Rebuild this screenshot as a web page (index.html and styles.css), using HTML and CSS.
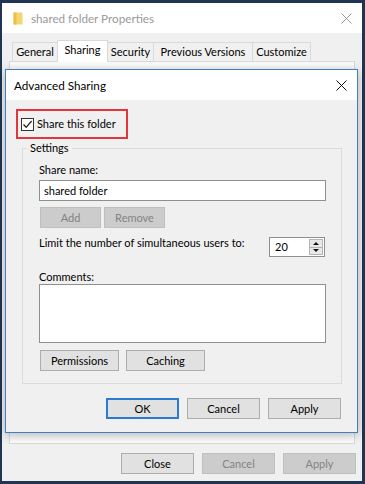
FILE: index.html
```html
<!DOCTYPE html>
<html>
<head>
<meta charset="utf-8">
<link rel="stylesheet" href="styles.css">
</head>
<body>
<div class="win">
  <div class="titlebar">
    <svg class="folder-ico" width="10" height="13" viewBox="0 0 10 13">
      <rect x="0.5" y="0.5" width="9" height="12" fill="#f4d56e"/>
      <rect x="0.5" y="0.5" width="3" height="12" fill="#e9c04f"/>
    </svg>
    <span class="title inactive">shared folder Properties</span>
    <svg class="x-ico" width="11" height="11" viewBox="0 0 11 11">
      <path d="M0.5 0.5 L10.5 10.5 M10.5 0.5 L0.5 10.5" stroke="#9a9a9a" stroke-width="1" fill="none"/>
    </svg>
  </div>
  <div class="tabs">
    <div class="tab t-general">General</div>
    <div class="tab sel t-sharing">Sharing</div>
    <div class="tab t-security">Security</div>
    <div class="tab t-prev">Previous Versions</div>
    <div class="tab t-custom">Customize</div>
  </div>
  <div class="panel"></div>
  <div class="btnrow outer">
    <button class="btn">Close</button>
    <button class="btn dis">Cancel</button>
    <button class="btn dis">Apply</button>
  </div>
</div>

<div class="dialog">
  <div class="dlg-title">
    <span class="title">Advanced Sharing</span>
    <svg class="x-ico" width="11" height="11" viewBox="0 0 11 11">
      <path d="M0.5 0.5 L10.5 10.5 M10.5 0.5 L0.5 10.5" stroke="#111" stroke-width="1" fill="none"/>
    </svg>
  </div>
  <div class="dlg-body">
    <div class="share-box">
      <span class="cb">
        <svg width="11" height="11" viewBox="0 0 11 11">
          <path d="M1.5 5.5 L4.2 8.3 L9.6 2" stroke="#222" stroke-width="1.3" fill="none"/>
        </svg>
      </span>
      <span>Share this folder</span>
    </div>
    <fieldset class="group">
      <legend>Settings</legend>
      <div class="group-body">
        <div class="lbl lbl-name">Share name:</div>
        <div class="textbox">shared folder</div>
        <div class="btns2">
          <button class="btn dis small">Add</button>
          <button class="btn dis small">Remove</button>
        </div>
        <div class="limit-row">
          <span class="lbl-limit">Limit the number of simultaneous users to:</span>
          <div class="spin">
            <span class="spin-val">20</span>
            <span class="spin-btns">
              <span class="spin-b"><span class="tri up"></span></span>
              <span class="spin-b"><span class="tri down"></span></span>
            </span>
          </div>
        </div>
        <div class="lbl lbl-comments">Comments:</div>
        <div class="textarea"></div>
        <div class="btns3">
          <button class="btn mid">Permissions</button>
          <button class="btn mid">Caching</button>
        </div>
      </div>
    </fieldset>
    <div class="btnrow dlg-btns">
      <button class="btn def">OK</button>
      <button class="btn">Cancel</button>
      <button class="btn">Apply</button>
    </div>
  </div>
</div>
</body>
</html>
```

FILE: styles.css
```css
html, body {
  margin: 0;
}
body {
  width: 365px;
  height: 484px;
  box-sizing: border-box;
  padding: 3px 3px 0 2px;
  background: #1f3552;
  overflow: hidden;
  position: relative;
  font-family: Lato, "Noto Sans", sans-serif;
  font-size: 11px;
  color: #000;
  white-space: nowrap;
}
.win {
  width: 360px;
  height: 478px;
  background: #f0f0f0;
  display: flex;
  flex-direction: column;
}
.titlebar {
  height: 30px;
  flex: none;
  background: #fff;
  display: flex;
  align-items: center;
  padding: 0 10px 0 11px;
}
.folder-ico {
  display: block;
}
.titlebar .title {
  margin-left: 8px;
}
.title {
  font-size: 11.7px;
}
.title.inactive {
  color: #9a9a9a;
}
.x-ico {
  display: block;
  margin-left: auto;
}
.tabs {
  display: flex;
  align-items: flex-end;
  height: 21px;
  margin-top: 7px;
  padding-left: 10px;
}
.tab {
  height: 19px;
  box-sizing: border-box;
  border: 1px solid #d9d9d9;
  border-bottom: none;
  background: #f0f0f0;
  display: flex;
  align-items: center;
  justify-content: center;
  margin-left: -1px;
  line-height: 16px;
}
.tab.sel {
  height: 22px;
  background: #fff;
  margin-bottom: -1px;
  position: relative;
  z-index: 1;
  padding-bottom: 3px;
}
.t-general { width: 46px; margin-left: 0; }
.t-sharing { width: 51px; }
.t-security { width: 47px; }
.t-prev { width: 100px; }
.t-custom { width: 59px; }
.panel {
  margin-left: 7px;
  width: 346px;
  height: 383px;
  box-sizing: border-box;
  border: 1px solid #d9d9d9;
  background: #fafafa;
}
.btnrow {
  display: flex;
  justify-content: flex-end;
  gap: 8px;
}
.btnrow.outer {
  margin-top: 9px;
  padding-right: 6px;
}
.btn {
  width: 73px;
  height: 21px;
  box-sizing: border-box;
  border: 1px solid #adadad;
  background: #e1e1e1;
  font: inherit;
  color: #000;
  padding: 0;
  line-height: 16px;
}
.btn.dis {
  background: #cccccc;
  border-color: #bfbfbf;
  color: #838383;
}
.btn.def {
  border: 2px solid #2b7bd0;
}
.btn.small {
  width: 61px;
}
.btn.mid {
  width: 79px;
}

.dialog {
  position: absolute;
  left: 5px;
  top: 69px;
  width: 353px;
  height: 364px;
  box-sizing: border-box;
  border: 1px solid #3f80c2;
  background: #f0f0f0;
  box-shadow: 0 2px 9px rgba(0, 0, 0, 0.28);
  display: flex;
  flex-direction: column;
}
.dlg-title {
  height: 30px;
  flex: none;
  background: #fff;
  display: flex;
  align-items: center;
  padding: 0 10px 0 8px;
}
.dlg-body {
  padding: 9px 15px 0 10px;
}
.share-box {
  width: 112px;
  height: 30px;
  box-sizing: border-box;
  border: 2px solid #e3353c;
  display: flex;
  align-items: center;
  padding-left: 3px;
  gap: 3px;
  line-height: 16px;
}
.cb {
  width: 13px;
  height: 13px;
  box-sizing: border-box;
  border: 1px solid #333;
  background: #fff;
  display: flex;
  align-items: center;
  justify-content: center;
}
.cb svg {
  display: block;
}
.group {
  margin: 1px 0 0 6px;
  padding: 0 0 12px 4px;
  border: 1px solid #dcdcdc;
  min-width: 0;
}
.group legend {
  padding: 0 3px;
  line-height: 16px;
}
.group-body {
  padding: 0 15px 0 12px;
}
.lbl {
  line-height: 16px;
}
.lbl-name {
  margin-top: 6px;
}
.textbox {
  margin-top: 2px;
  height: 21px;
  box-sizing: border-box;
  border: 1px solid #8f8f8f;
  background: #fff;
  padding-left: 4px;
  line-height: 19px;
}
.btns2 {
  margin-top: 6px;
  margin-left: 1px;
  display: flex;
  gap: 3px;
}
.limit-row {
  margin-top: 9px;
  display: flex;
  justify-content: space-between;
  align-items: flex-start;
}
.lbl-limit {
  line-height: 12px;
}
.spin {
  width: 56px;
  height: 20px;
  box-sizing: border-box;
  border: 1px solid #8f8f8f;
  background: #fff;
  margin-right: 1px;
  display: flex;
  align-items: stretch;
}
.spin-val {
  flex: 1;
  padding-left: 5px;
  line-height: 18px;
}
.spin-btns {
  width: 14px;
  margin: 1px 1px 1px 0;
  display: flex;
  flex-direction: column;
}
.spin-b {
  flex: 1;
  box-sizing: border-box;
  border: 1px solid #b5b5b5;
  background: #e8e8e8;
  display: flex;
  align-items: center;
  justify-content: center;
}
.spin-b + .spin-b {
  border-top: none;
}
.tri {
  width: 0;
  height: 0;
  border-left: 3px solid transparent;
  border-right: 3px solid transparent;
}
.tri.up {
  border-bottom: 3px solid #111;
}
.tri.down {
  border-top: 3px solid #111;
}
.lbl-comments {
  margin-top: 13px;
  line-height: 14px;
}
.textarea {
  height: 59px;
  box-sizing: border-box;
  border: 1px solid #8f8f8f;
  background: #fff;
}
.btns3 {
  margin-top: 7px;
  margin-left: 1px;
  display: flex;
  gap: 7px;
}
.dlg-btns {
  margin-top: 14px;
  margin-right: 1px;
}
```
